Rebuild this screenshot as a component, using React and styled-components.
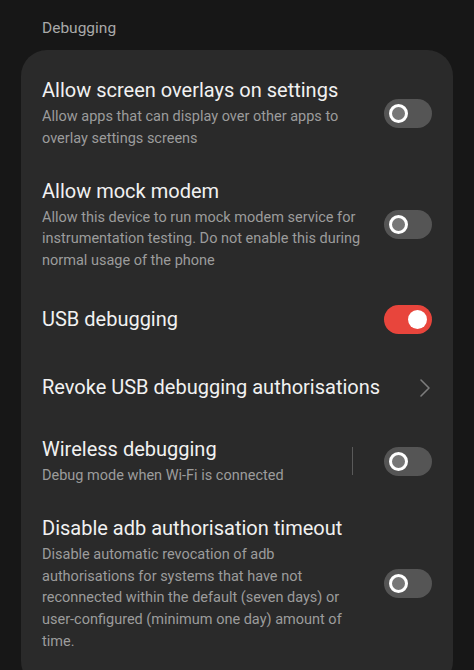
import React from 'react';
import styled, { createGlobalStyle } from 'styled-components';

const Global = createGlobalStyle`
  html, body {
    margin: 0;
    padding: 0;
    background: #171717;
    font-family: Roboto, "Noto Sans", "Liberation Sans", sans-serif;
    -webkit-font-smoothing: antialiased;
  }
`;

const Page = styled.div`
  width: 474px;
  height: 670px;
  overflow: hidden;
  background: #171717;
`;

const Header = styled.div`
  padding: 18px 42px 12px;
  font-size: 15.5px;
  line-height: 20px;
  color: #a9a9a9;
`;

const Card = styled.div`
  margin: 0 21px;
  padding: 13px 21px 20px;
  background: #2a2a2a;
  border-radius: 26px;
`;

const Row = styled.div`
  display: flex;
  align-items: center;
  min-height: 68px;
  padding: 14px 0;
  box-sizing: border-box;
`;

const Texts = styled.div`
  flex: 1;
  min-width: 0;
  padding-right: ${p => p.$pad || 18}px;
`;

const Title = styled.div`
  font-size: 20px;
  line-height: 27px;
  color: #f1f1f1;
`;

const Sub = styled.div`
  font-size: 14.5px;
  line-height: 21.8px;
  color: #9c9c9c;
  margin-top: 2px;
`;

const Track = styled.div`
  width: 48px;
  height: 29px;
  border-radius: 15px;
  flex-shrink: 0;
  background: ${p => (p.$on ? '#e8453c' : '#555555')};
  display: flex;
  align-items: center;
  justify-content: ${p => (p.$on ? 'flex-end' : 'flex-start')};
  padding: 0 5px;
  box-sizing: border-box;
`;

const Knob = styled.div`
  width: 19px;
  height: 19px;
  border-radius: 50%;
  box-sizing: border-box;
  background: ${p => (p.$on ? '#ffffff' : '#777777')};
  border: ${p => (p.$on ? 'none' : '3.5px solid #ffffff')};
`;

const Divider = styled.div`
  width: 1px;
  height: 28px;
  background: #5a5a5a;
  margin-right: 31px;
  flex-shrink: 0;
`;

const Chevron = styled.svg`
  width: 12px;
  height: 20px;
  flex-shrink: 0;
  margin-right: 1px;
`;

const Toggle = ({ on }) => (
  <Track $on={on}>
    <Knob $on={on} />
  </Track>
);

const App = () => (
  <Page>
    <Global />
    <Header>Debugging</Header>
    <Card>
      <Row>
        <Texts>
          <Title>Allow screen overlays on settings</Title>
          <Sub>Allow apps that can display over other apps to overlay settings screens</Sub>
        </Texts>
        <Toggle />
      </Row>
      <Row>
        <Texts>
          <Title>Allow mock modem</Title>
          <Sub>Allow this device to run mock modem service for instrumentation testing. Do not enable this during normal usage of the phone</Sub>
        </Texts>
        <Toggle />
      </Row>
      <Row>
        <Texts>
          <Title>USB debugging</Title>
        </Texts>
        <Toggle on />
      </Row>
      <Row>
        <Texts>
          <Title>Revoke USB debugging authorisations</Title>
        </Texts>
        <Chevron viewBox="0 0 12 20">
          <path d="M2 2 L10 10 L2 18" fill="none" stroke="#7d7d7d" strokeWidth="1.6" strokeLinecap="round" strokeLinejoin="round" />
        </Chevron>
      </Row>
      <Row>
        <Texts $pad={16}>
          <Title>Wireless debugging</Title>
          <Sub>Debug mode when Wi-Fi is connected</Sub>
        </Texts>
        <Divider />
        <Toggle />
      </Row>
      <Row>
        <Texts>
          <Title>Disable adb authorisation timeout</Title>
          <Sub>Disable automatic revocation of adb authorisations for systems that have not reconnected within the default (seven days) or user-configured (minimum one day) amount of time.</Sub>
        </Texts>
        <Toggle />
      </Row>
    </Card>
  </Page>
);

export default App;
